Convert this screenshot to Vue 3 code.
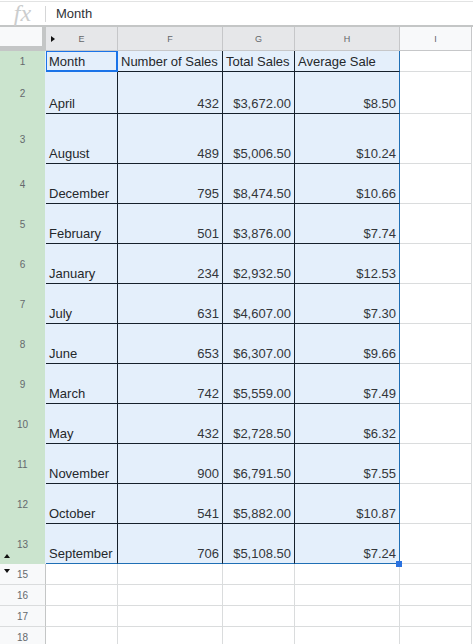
<script setup>
const cols = ['E', 'F', 'G', 'H', 'I']
const rows = [
  { n: 1, h: 21, cells: ['Month', 'Number of Sales', 'Total Sales', 'Average Sale'], head: true },
  { n: 2, h: 42, cells: ['April', '432', '$3,672.00', '$8.50'] },
  { n: 3, h: 50, cells: ['August', '489', '$5,006.50', '$10.24'] },
  { n: 4, h: 40, cells: ['December', '795', '$8,474.50', '$10.66'] },
  { n: 5, h: 40, cells: ['February', '501', '$3,876.00', '$7.74'] },
  { n: 6, h: 40, cells: ['January', '234', '$2,932.50', '$12.53'] },
  { n: 7, h: 40, cells: ['July', '631', '$4,607.00', '$7.30'] },
  { n: 8, h: 40, cells: ['June', '653', '$6,307.00', '$9.66'] },
  { n: 9, h: 40, cells: ['March', '742', '$5,559.00', '$7.49'] },
  { n: 10, h: 40, cells: ['May', '432', '$2,728.50', '$6.32'] },
  { n: 11, h: 40, cells: ['November', '900', '$6,791.50', '$7.55'] },
  { n: 12, h: 40, cells: ['October', '541', '$5,882.00', '$10.87'] },
  { n: 13, h: 40, cells: ['September', '706', '$5,108.50', '$7.24'], last: true }
]
const blanks = [15, 16, 17, 18]
</script>

<template>
  <div class="sheet">
    <div class="formula">
      <span class="fx">fx</span>
      <span class="divider"></span>
      <span class="value">Month</span>
    </div>
    <div class="head">
      <div class="corner"></div>
      <div class="corner-gap"></div>
      <div v-for="c in cols" :key="c" class="col" :class="{ off: c === 'I' }">
        <span v-if="c === 'E'" class="arrow-right"></span>{{ c }}
      </div>
    </div>
    <div v-for="r in rows" :key="r.n" class="row" :style="{ height: r.h + 'px' }">
      <div class="num sel">
        {{ r.n }}
        <span v-if="r.n === 13" class="arrow-up"></span>
      </div>
      <div
        v-for="(t, i) in r.cells"
        :key="i"
        class="cell"
        :class="{ right: !r.head && i > 0, active: r.n === 1 && i === 0, noline: r.last, edge: i === 3 }"
      >{{ t }}</div>
      <div class="blank w1"></div>
      <span v-if="r.last" class="handle"></span>
    </div>
    <div v-for="b in blanks" :key="b" class="row empty">
      <div class="num plain">
        <span v-if="b === 15" class="arrow-down"></span>
        {{ b }}
      </div>
      <div class="blank w1"></div>
      <div class="blank w2"></div>
      <div class="blank w1"></div>
      <div class="blank w2"></div>
      <div class="blank w1"></div>
    </div>
  </div>
</template>

<style>
html, body { margin: 0; background: #fff; }
</style>

<style scoped>
.sheet {
  width: 473px;
  height: 644px;
  overflow: hidden;
  font-family: "Liberation Sans", Arial, sans-serif;
  background: #fff;
}
.formula {
  margin-top: 1px;
  border-top: 1px solid #e2e3e3;
  border-bottom: 2px solid #c4c6c6;
  display: flex;
  align-items: center;
  height: 23px;
}
.fx {
  width: 45px;
  text-align: center;
  font: italic 24px/23px "Liberation Serif", serif;
  color: #cbcdce;
}
.divider { width: 1px; height: 16px; background: #d5d6d7; }
.value {
  margin-left: 10px;
  font: 13px "Liberation Sans", Arial, sans-serif;
  color: #2f3236;
}
.head { display: flex; height: 24px; }
.corner {
  width: 42px;
  height: 19px;
  background: #f8f9fa;
  border-bottom: 5px solid #c4c6c6;
}
.corner-gap { width: 4px; background: #c4c6c6; }
.col {
  position: relative;
  box-sizing: border-box;
  display: flex;
  align-items: center;
  justify-content: center;
  background: #e6e7e9;
  border-right: 1px solid #c6c7c9;
  border-bottom: 1px solid #c6c7c9;
  font: 9px "Liberation Sans", Arial, sans-serif;
  color: #63666a;
}
.col:nth-child(3) { width: 72px; }
.col:nth-child(4) { width: 105px; }
.col:nth-child(5) { width: 72px; }
.col:nth-child(6) { width: 105px; }
.col.off { width: 72px; background: #f8f9fa; }
.arrow-right {
  position: absolute;
  left: 5px;
  top: 9px;
  border-left: 4px solid #111;
  border-top: 3px solid transparent;
  border-bottom: 3px solid transparent;
}
.row { position: relative; display: flex; }
.row.empty { height: 21px; }
.num {
  position: relative;
  box-sizing: border-box;
  width: 46px;
  flex: none;
  display: flex;
  align-items: center;
  justify-content: center;
  font: 10px "Liberation Sans", Arial, sans-serif;
  color: #65696d;
}
.num.sel { background: #cbe4ce; border-right: 1px solid #e4effb; }
.num.plain {
  height: 21px;
  background: #f8f9fa;
  border-right: 1px solid #c4c6c6;
  border-bottom: 1px solid #dadcdd;
}
.arrow-up {
  position: absolute;
  left: 4px;
  bottom: 6px;
  border-bottom: 4px solid #111;
  border-left: 3px solid transparent;
  border-right: 3px solid transparent;
}
.arrow-down {
  position: absolute;
  left: 4px;
  top: 5px;
  border-top: 4px solid #111;
  border-left: 3px solid transparent;
  border-right: 3px solid transparent;
}
.cell {
  box-sizing: border-box;
  display: flex;
  align-items: flex-end;
  padding: 0 3px 1px 3px;
  background: #e4effb;
  border-right: 1px solid #15202b;
  border-bottom: 1px solid #15202b;
  font: 13px/16px "Liberation Sans", Arial, sans-serif;
  color: #25282b;
  white-space: nowrap;
  overflow: hidden;
}
.cell:nth-child(2) { width: 72px; }
.cell:nth-child(3) { width: 105px; }
.cell:nth-child(4) { width: 72px; }
.cell:nth-child(5) { width: 105px; }
.cell.right { justify-content: flex-end; color: #33363a; }
.cell.edge { border-right-color: #1f6fb5; }
.cell.noline { border-bottom-color: #1f6fb5; }
.cell.active { box-shadow: inset 0 0 0 1px #1a73e8; border-right-color: #1a73e8; border-bottom-color: #1a73e8; }
.blank {
  box-sizing: border-box;
  flex: none;
  border-right: 1px solid #dadcdd;
  border-bottom: 1px solid #dadcdd;
}
.blank.w1 { width: 72px; }
.blank.w2 { width: 105px; }
.handle {
  position: absolute;
  z-index: 2;
  left: 396px;
  bottom: -3px;
  width: 6px;
  height: 6px;
  background: #2a72e0;
}
</style>
